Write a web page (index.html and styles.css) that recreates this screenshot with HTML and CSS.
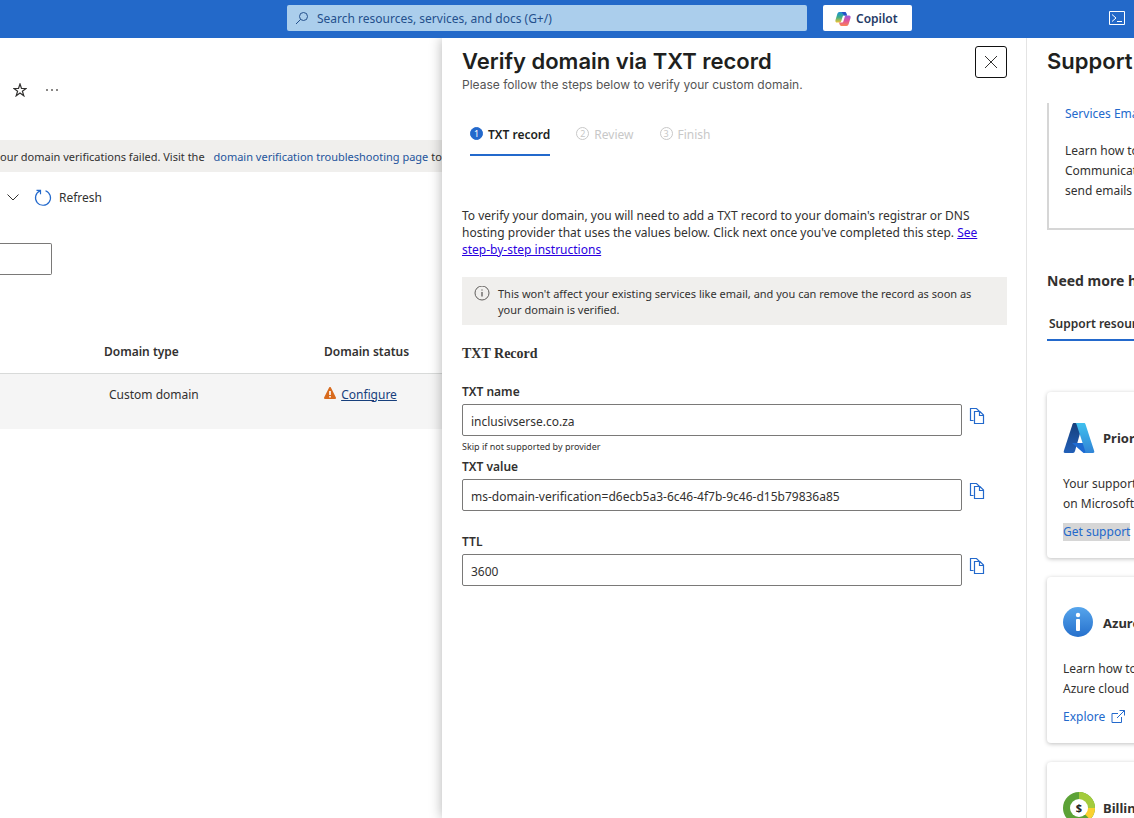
FILE: index.html
```
<!DOCTYPE html>
<html lang="en">
<head>
    <meta charset="UTF-8">
    <meta name="viewport" content="width=device-width, initial-scale=1.0">
    <title>Verify domain via TXT record</title>
    <link rel="stylesheet" href="styles.css">
</head>
<body>
    <!-- icons used more than once -->
    <svg class="sprite" aria-hidden="true">
        <symbol id="copy" viewBox="0 0 16 18">
            <path d="M4.500 13.500H1.500v-12h6l3 3M5.500 4.500h5.500l3.500 3.500v8.500h-9zM10.500 4.500v4h4" fill="none" stroke="currentColor" stroke-width="1.200"/>
        </symbol>
    </svg>

    <header class="topbar">
        <form class="search">
            <svg class="search-icon" viewBox="0 0 14 14" aria-hidden="true">
                <circle cx="8.500" cy="5.500" r="4" fill="none" stroke="#24508c"/>
                <path d="M5.600 8.400L1 13" stroke="#24508c"/>
            </svg>
            <input type="text" aria-label="Search" placeholder="Search resources, services, and docs (G+/)">
        </form>
        <button class="copilot" type="button">
            <svg viewBox="0 0 16 16" width="16" height="16" aria-hidden="true">
                <defs>
                    <linearGradient id="cool" x1="0" y1="0" x2="0" y2="1">
                        <stop offset="0" stop-color="#1d8fd6"/>
                        <stop offset=".5" stop-color="#3fae86"/>
                        <stop offset="1" stop-color="#f2c433"/>
                    </linearGradient>
                    <linearGradient id="warm" x1="0" y1="0" x2="0" y2="1">
                        <stop offset="0" stop-color="#9a5be0"/>
                        <stop offset=".5" stop-color="#e0559a"/>
                        <stop offset="1" stop-color="#fb8455"/>
                    </linearGradient>
                </defs>
                <path d="M4.500 1h5.200c1.200 0 1.500.8 1.800 1.900L12 4.500H9.300c-1 0-1.500.5-1.800 1.500L6.300 10c-.4 1.200-1 1.500-2 1.500H2C.6 11.500.1 10.300.5 8.900L2.300 3C2.700 1.700 3.300 1 4.500 1z" fill="url(#cool)"/>
                <path d="M11.500 15H6.300c-1.200 0-1.500-.8-1.800-1.900L4 11.500h2.700c1 0 1.500-.5 1.800-1.500L9.700 6c.4-1.200 1-1.500 2-1.500H14c1.400 0 1.900 1.200 1.500 2.600L13.700 13c-.4 1.300-1 2-2.200 2z" fill="url(#warm)"/>
                <path d="M6.500 1h3.200c1.200 0 1.500.8 1.800 1.900L12 4.500H9.300z" fill="#2450c8"/>
            </svg>
            Copilot
        </button>
        <button class="shell" type="button" aria-label="Cloud Shell">
            <svg viewBox="0 0 16 14" width="16" height="14" fill="none" stroke="#fff" aria-hidden="true">
                <path d="M.5.5h15v13H.5zM3 3.500l4 3.500-4 3.500M8 10.500h5"/>
            </svg>
        </button>
    </header>

    <div class="layout">
        <main class="domains">
            <div class="title-tools">
                <button type="button" aria-label="Add to favorites">
                    <svg viewBox="0 0 14 14" width="14" height="14" aria-hidden="true">
                        <path d="M7 1l1.500 4.500H13L9.400 8.200l1.400 4.600L7 10l-3.800 2.800 1.400-4.600L1 5.500h4.500z" fill="none" stroke="#323130" stroke-width="1.200"/>
                    </svg>
                </button>
                <button type="button" aria-label="More">
                    <svg viewBox="0 0 12 2" width="12" height="2" fill="#8a8886" aria-hidden="true">
                        <path d="M0 0h2v2H0zM5 0h2v2H5zM10 0h2v2h-2z"/>
                    </svg>
                </button>
            </div>
            <p class="banner">our domain verifications failed. Visit the <a href="#">domain verification troubleshooting page</a> to</p>
            <div class="commands">
                <button type="button" aria-label="Expand">
                    <svg viewBox="0 0 12 7" width="12" height="7" aria-hidden="true">
                        <path d="M.5.500l5.500 5.500L11.500.5" fill="none" stroke="#323130"/>
                    </svg>
                </button>
                <button type="button">
                    <svg viewBox="0 0 18 18" width="18" height="18" fill="none" stroke="#2369cc" stroke-width="1.200" aria-hidden="true">
                        <path d="M11.500 1.700a7.500 7.500 0 1 1-5.500.2M2.500 1.300h4v4"/>
                    </svg>
                    Refresh
                </button>
            </div>
            <input class="filter" type="text" aria-label="Filter domains">
            <table>
                <thead>
                    <tr><td class="name"></td><th class="type">Domain type</th><th>Domain status</th></tr>
                </thead>
                <tbody>
                    <tr>
                        <td></td>
                        <td class="type">Custom domain</td>
                        <td>
                            <svg class="warning" viewBox="0 0 12 12" width="12" height="12" aria-hidden="true">
                                <path d="M6 1l5 10H1z" fill="#d86b1e" stroke="#d86b1e" stroke-width="2" stroke-linejoin="round"/>
                                <path d="M5.200 4h1.600v4H5.200zM5.200 9h1.600v1.600H5.200z" fill="#fff"/>
                            </svg>
                            <a href="#">Configure</a>
                        </td>
                    </tr>
                </tbody>
            </table>
        </main>

        <section class="panel">
            <header class="panel-head">
                <div>
                    <h1>Verify domain via TXT record</h1>
                    <p>Please follow the steps below to verify your custom domain.</p>
                </div>
                <button class="close" type="button" aria-label="Close">
                    <svg viewBox="0 0 12 12" width="12" height="12" aria-hidden="true">
                        <path d="M0 0l12 12M12 0L0 12" stroke="#323130"/>
                    </svg>
                </button>
            </header>

            <ol class="steps">
                <li class="current"><span>1</span>TXT record</li>
                <li><span>2</span>Review</li>
                <li><span>3</span>Finish</li>
            </ol>

            <p class="intro">To verify your domain, you will need to add a TXT record to your domain's registrar or DNS hosting provider that uses the values below. Click next once you've completed this step. <a href="#">See step-by-step instructions</a></p>

            <div class="note">
                <svg viewBox="0 0 16 16" width="16" height="16" aria-hidden="true">
                    <circle cx="8" cy="7" r="7" fill="none" stroke="#605e5c"/>
                    <path d="M7.500 6h1v4.500h-1zM7.500 3.500h1v1h-1z" fill="#323130"/>
                </svg>
                <p>This won't affect your existing services like email, and you can remove the record as soon as your domain is verified.</p>
            </div>

            <h2>TXT Record</h2>

            <form>
                <div class="field">
                    <label for="txt-name">TXT name</label>
                    <div class="row">
                        <input id="txt-name" type="text" value="inclusivserse.co.za" readonly>
                        <button type="button" aria-label="Copy TXT name"><svg width="16" height="18"><use href="#copy"/></svg></button>
                    </div>
                    <small>Skip if not supported by provider</small>
                </div>
                <div class="field">
                    <label for="txt-value">TXT value</label>
                    <div class="row">
                        <input id="txt-value" type="text" value="ms-domain-verification=d6ecb5a3-6c46-4f7b-9c46-d15b79836a85" readonly>
                        <button type="button" aria-label="Copy TXT value"><svg width="16" height="18"><use href="#copy"/></svg></button>
                    </div>
                </div>
                <div class="field">
                    <label for="ttl">TTL</label>
                    <div class="row">
                        <input id="ttl" type="text" value="3600" readonly>
                        <button type="button" aria-label="Copy TTL"><svg width="16" height="18"><use href="#copy"/></svg></button>
                    </div>
                </div>
            </form>
        </section>

        <aside class="support">
            <h2>Support</h2>
            <div class="article">
                <a href="#">Services Email</a>
                <p>Learn how to<br>Communication<br>send emails</p>
            </div>
            <h3>Need more help?</h3>
            <button class="tab" type="button">Support resources</button>

            <article class="card">
                <h4>
                    <svg viewBox="0 0 32 32" width="32" height="32" aria-hidden="true">
                        <defs>
                            <linearGradient id="az1" x1="0" y1="0" x2="0" y2="1"><stop offset="0" stop-color="#173f7c"/><stop offset="1" stop-color="#2260b8"/></linearGradient>
                            <linearGradient id="az2" x1="0" y1="0" x2="0" y2="1"><stop offset="0" stop-color="#40c0ee"/><stop offset="1" stop-color="#3084d6"/></linearGradient>
                        </defs>
                        <path d="M11 1h9l-8 28c-.4 1.300-1 2-2 2H2c-1.200 0-1.500-1-1.200-2L9.500 2.200C9.800 1.400 10.200 1 11 1z" fill="url(#az1)"/>
                        <path d="M9 21h13l2 10h-3.500z" fill="#1d6ad2"/>
                        <path d="M12 1h9c.8 0 1.200.4 1.500 1.200L31.200 29c.3 1 0 2-1.200 2h-9c1.200 0 1.500-1 1.200-2L13.500 2.200C13.200 1.400 12.800 1 12 1z" fill="url(#az2)"/>
                    </svg>
                    Priority
                </h4>
                <p>Your support<br>on Microsoft</p>
                <a class="selected" href="#">Get support</a>
            </article>

            <article class="card">
                <h4>
                    <svg viewBox="0 0 32 32" width="32" height="32" aria-hidden="true">
                        <defs><linearGradient id="info" x1="0" y1="0" x2="0" y2="1"><stop offset="0" stop-color="#56a5ec"/><stop offset="1" stop-color="#2670cc"/></linearGradient></defs>
                        <circle cx="15" cy="15" r="15" fill="url(#info)"/>
                        <circle cx="15" cy="8" r="2.200" fill="#fff"/>
                        <rect x="13" y="12" width="4" height="12" rx="1" fill="#fff"/>
                    </svg>
                    Azure
                </h4>
                <p>Learn how to<br>Azure cloud</p>
                <a href="#">Explore
                    <svg viewBox="0 0 14 14" width="14" height="14" fill="none" stroke="currentColor" aria-hidden="true">
                        <path d="M7 3.500H1v9h9.500V7M8.500.500h5v5M13.500.5L6 8"/>
                    </svg>
                </a>
            </article>

            <article class="card">
                <h4>
                    <svg viewBox="0 0 32 32" width="32" height="32" aria-hidden="true">
                        <circle cx="16" cy="16" r="16" fill="#5ca236"/>
                        <path d="M16 16V0a16 16 0 0 1 16 16z" fill="#a3cb3c"/>
                        <path d="M16 16h16a16 16 0 0 1-5 11.500z" fill="#fad02f"/>
                        <circle cx="16" cy="16" r="9" fill="#fff"/>
                        <text x="16" y="20" text-anchor="middle" font-size="11" font-weight="700" fill="#222">$</text>
                    </svg>
                    Billing
                </h4>
            </article>
        </aside>
    </div>
</body>
</html>
```

FILE: styles.css
```
* {margin:0; padding:0; box-sizing:border-box;}
body {
    display:flex; flex-direction:column;
    height:100vh;
    overflow:hidden;
    font:12px/16px "Noto Sans", sans-serif;
    color:#323130;
    background-color:#fff;
}
button {
    display:flex; align-items:center;
    border:0; background:none;
    font:inherit; color:inherit;
}
a {color:#2369cc; text-decoration:none;}
svg {flex:none;}
.sprite {position:absolute; width:0; height:0;}

/* top bar */
.topbar {
    display:flex; align-items:center; gap:16px;
    flex:none;
    height:38px;
    padding:0 9px 2px 287px;
    background-color:#2369c9;
}
.search {
    display:flex; align-items:center; gap:8px;
    flex:0 1 520px;
    height:26px; padding:0 8px;
    border-radius:2px;
    background-color:#abceec;
}
.search-icon {width:14px; height:14px;}
.search input {
    flex:1;
    padding-top:2px;
    border:0; background:none;
    font:inherit;
}
.search input::placeholder {color:#24508c; opacity:1;}
.copilot {
    gap:5px;
    height:26px; padding:1px 14px 0 12px;
    border-radius:2px;
    background-color:#fff;
    font-weight:600; color:#243a66;
}
.shell {margin-left:auto;}

.layout {
    display:grid; grid-template-columns:minmax(0, 442fr) minmax(0, 585fr) minmax(0, 107fr);
    flex:1;
    min-height:0;
}

/* domain list */
.domains {white-space:nowrap; overflow:hidden;}
.title-tools {
    display:flex; gap:19px;
    height:102px; padding:2px 0 0 13px;
}
.banner {
    height:32px; padding:9px 0 7px;
    background-color:#f0efed;
    font-size:11px;
}
.banner a {margin-left:6px; color:#24549c;}
.commands {
    display:flex; gap:15px;
    height:51px; padding-left:7px;
}
.commands button {gap:7px;}
.filter {
    display:block;
    width:52px; height:32px; margin:20px 0 54px;
    border:1px solid #7a7978; border-left:0;
    border-radius:0 2px 2px 0;
}
table {
    width:100%;
    border-collapse:collapse; table-layout:fixed;
    text-align:left;
}
thead {border-bottom:1px solid #d8dad9;}
thead tr {height:44px;}
th {padding-top:2px; font-weight:600;}
.name {width:104px;}
th.type {width:220px;}
td.type {padding-left:5px;}
tbody tr {height:56px; background-color:#f5f5f5;}
tbody td {padding-top:13px; vertical-align:top;}
tbody a {margin-left:2px; color:#173f7c; text-decoration:underline;}

/* verify panel */
.panel {
    position:relative;
    padding:0 19px 0 20px;
    border-right:1px solid #e4e4e4;
    background-color:#fff;
    box-shadow:0 0 12px rgba(0, 0, 0, .3);
    clip-path:inset(0 0 0 -20px);
}
.panel-head {
    display:flex; justify-content:space-between; align-items:flex-start;
    padding-top:8px;
}
.panel-head h1, .support h2 {
    font:600 22px/31px Inter, sans-serif;
    color:#201f1e;
}
.panel-head p {font:12px/16px Inter, sans-serif; color:#555;}
.close {
    justify-content:center;
    width:32px; height:32px;
    border:1px solid #111; border-radius:3px;
}
.steps {
    display:flex; gap:26px;
    margin:34px 8px 0;
    list-style:none;
    color:#c8c8c8;
}
.steps li {
    display:flex; gap:5px;
    padding-bottom:11px;
    border-bottom:2px solid transparent;
}
.steps span {
    width:13px; height:13px;
    border:1px solid #c8c8c8; border-radius:50%;
    font-size:9px; line-height:11px; text-align:center;
}
.steps .current {border-color:#2369cc; font-weight:600; color:#201f1e;}
.steps .current span {border-color:#2369cc; background-color:#2369cc; font-weight:400; color:#fff;}
.intro {margin:51px 0 19px; line-height:17px;}
.intro a {color:#2a00e0; text-decoration:underline;}
.note {
    display:flex; gap:8px;
    padding:9px 12px 7px;
    background-color:#f0efed;
    font-size:11px;
}
.panel h2 {
    margin:19px 0;
    font:700 14px/19px "Liberation Serif", serif;
}
.field {height:75px;}
.field label {display:block; line-height:20px; margin-bottom:2px; font-weight:600;}
.row {display:flex; align-items:flex-start;}
.row input {
    flex:1;
    height:32px; padding:2px 8px 0;
    border:1px solid #7a7978; border-radius:2px;
    font:inherit; color:inherit;
}
.row button {width:45px; padding:3px 7px; color:#2369cc;}
.field small {display:block; font-size:9px; line-height:21px;}

/* support column */
.support {
    padding:8px 0 0 20px;
    overflow:hidden;
    white-space:nowrap;
    line-height:20px;
}
.support h2 {margin-bottom:26px;}
.article {
    height:127px; padding:1px 0 0 16px;
    border-left:2px solid #d6d6d6; border-bottom:2px solid #d6d6d6;
}
.article p {margin-top:17px;}
.support h3 {margin:41px 0 20px; font-size:14px; line-height:20px;}
.tab {
    height:30px; padding:0 2px 2px;
    border-bottom:2px solid #2369cc;
    font-weight:600;
}
.card {
    width:280px; height:166px; margin-bottom:19px; padding:30px 16px;
    border-radius:4px;
    box-shadow:0 1px 4px rgba(0, 0, 0, .25);
}
.tab + .card {margin-top:51px;}
.card h4 {
    display:flex; align-items:center; gap:8px;
    height:32px; margin-bottom:20px;
    font-size:13px;
}
.card a {display:inline-flex; align-items:center; gap:6px; margin-top:9px; line-height:18px;}
.selected {background-color:#d6d6d6;}
```
